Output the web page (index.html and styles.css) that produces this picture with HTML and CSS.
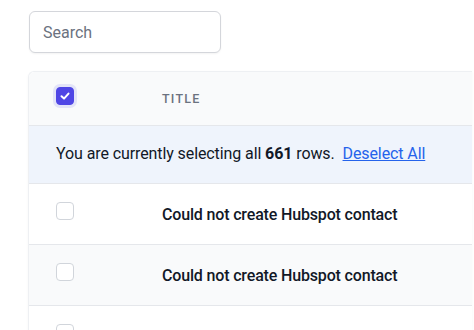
FILE: index.html
```html
<!DOCTYPE html>
<html lang="en">
<head>
<meta charset="utf-8">
<title>Table</title>
<link rel="stylesheet" href="styles.css">
</head>
<body>
<div class="page">
  <input class="search" type="text" placeholder="Search">
  <div class="table">
    <div class="row head">
      <div class="cell-check"><span class="cb checked"><svg viewBox="0 0 16 16" width="16" height="16"><path d="M4.5 8.3 L7 10.6 L11.5 5.6" fill="none" stroke="#fff" stroke-width="2" stroke-linecap="round" stroke-linejoin="round"/></svg></span></div>
      <div class="th">TITLE</div>
    </div>
    <div class="banner">You are currently selecting all <b>661</b> rows. <a href="#" class="link">Deselect All</a></div>
    <div class="row">
      <div class="cell-check"><span class="cb"></span></div>
      <div class="td">Could not create Hubspot contact</div>
    </div>
    <div class="row alt">
      <div class="cell-check"><span class="cb"></span></div>
      <div class="td">Could not create Hubspot contact</div>
    </div>
    <div class="row">
      <div class="cell-check"><span class="cb"></span></div>
      <div class="td">Could not create Hubspot contact</div>
    </div>
  </div>
</div>
</body>
</html>
```
FILE: styles.css
```css
* { box-sizing: border-box; }
html, body { margin: 0; padding: 0; background: #fff; overflow: hidden; }
body { font-family: Roboto, "Liberation Sans", sans-serif; color: #111827; }
.page { padding: 11px 2px 0 29px; }
.search {
  display: block;
  width: 192px;
  height: 42px;
  border: 1px solid #d4d6db;
  border-radius: 6px;
  padding: 0 13px;
  font-family: Roboto, "Liberation Sans", sans-serif;
  font-size: 16px;
  color: #111827;
  background: #fff;
  box-shadow: 0 1px 2px rgba(0,0,0,0.05);
  outline: none;
}
.search::placeholder { color: #6b7280; }
.table {
  margin: 18px 0 0 -1px;
  border: 1px solid #eef0f3;
  border-right: none;
  border-bottom: none;
  border-radius: 6px 0 0 0;
  box-shadow: 0 1px 3px rgba(0,0,0,0.04);
}
.row {
  display: grid;
  grid-template-columns: 106px 1fr;
  align-items: center;
  padding-left: 27px;
  height: 61px;
  border-bottom: 1px solid #e5e7eb;
  background: #fff;
}
.row.alt { background: #f9fafb; }
.row.head { height: 54px; background: #f9fafb; border-radius: 6px 0 0 0; }
.cell-check { display: flex; align-items: center; }
.cb {
  width: 18px;
  height: 18px;
  border: 1px solid #d1d5db;
  border-radius: 4px;
  background: #fff;
  margin-bottom: 7px;
  display: flex;
  align-items: center;
  justify-content: center;
}
.row.head .cb { margin-bottom: 6px; }
.cb.checked {
  background: #4f46e5;
  border-color: #4f46e5;
  box-shadow: 0 0 0 3px #e3e4f8;
}
.th {
  font-size: 12.5px;
  font-weight: 500;
  letter-spacing: 0.1em;
  color: #6b7280;
}
.td {
  font-size: 16px;
  font-weight: 500;
  letter-spacing: -0.01em;
  color: #111827;
}
.banner {
  height: 58px;
  display: flex;
  align-items: center;
  padding-left: 27px;
  padding-bottom: 2px;
  background: #eff4fc;
  border-bottom: 1px solid #e5e7eb;
  font-size: 16px;
  letter-spacing: -0.006em;
  color: #111827;
  white-space: pre;
}
.banner b { font-weight: 700; }
.link { color: #2563eb; text-decoration: underline; margin-left: 4px; }
```
